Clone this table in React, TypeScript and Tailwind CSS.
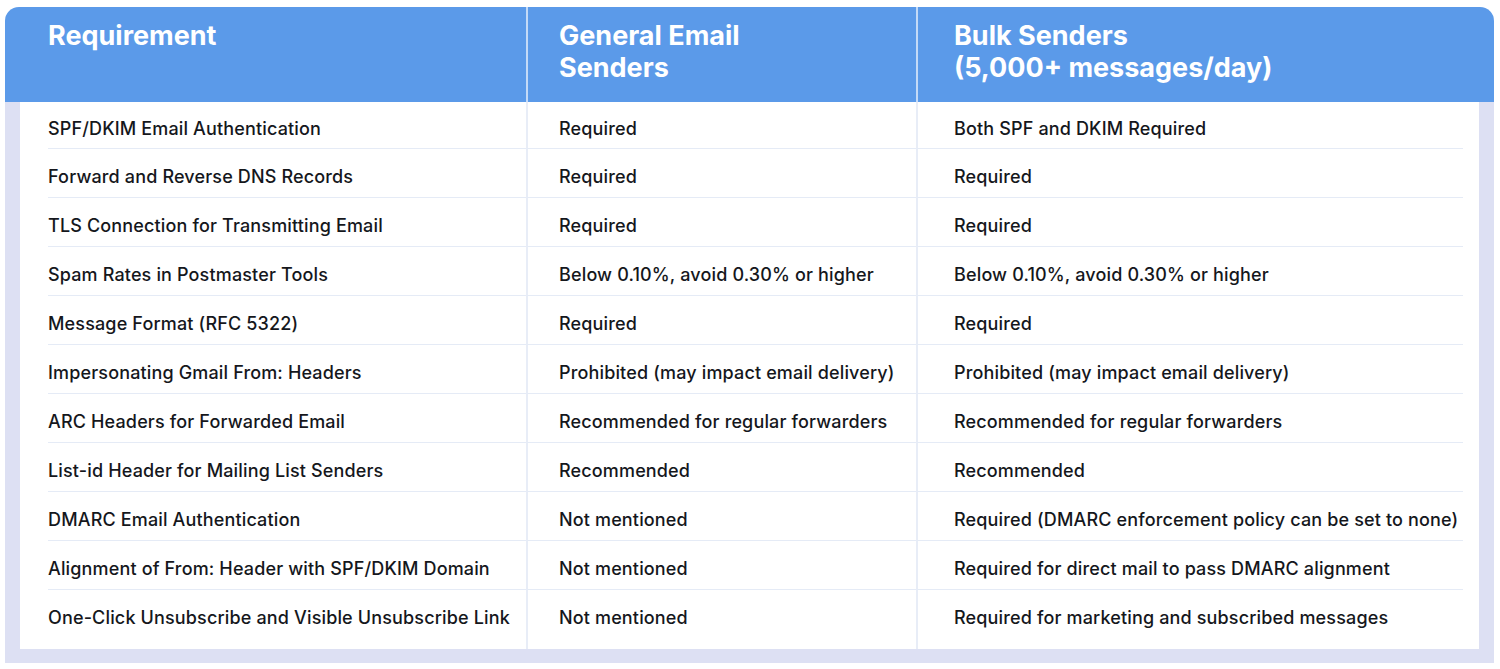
import React from 'react';

const rows: [string, string, string][] = [
  ['SPF/DKIM Email Authentication', 'Required', 'Both SPF and DKIM Required'],
  ['Forward and Reverse DNS Records', 'Required', 'Required'],
  ['TLS Connection for Transmitting Email', 'Required', 'Required'],
  ['Spam Rates in Postmaster Tools', 'Below 0.10%, avoid 0.30% or higher', 'Below 0.10%, avoid 0.30% or higher'],
  ['Message Format (RFC 5322)', 'Required', 'Required'],
  ['Impersonating Gmail From: Headers', 'Prohibited (may impact email delivery)', 'Prohibited (may impact email delivery)'],
  ['ARC Headers for Forwarded Email', 'Recommended for regular forwarders', 'Recommended for regular forwarders'],
  ['List-id Header for Mailing List Senders', 'Recommended', 'Recommended'],
  ['DMARC Email Authentication', 'Not mentioned', 'Required (DMARC enforcement policy can be set to none)'],
  ['Alignment of From: Header with SPF/DKIM Domain', 'Not mentioned', 'Required for direct mail to pass DMARC alignment'],
  ['One-Click Unsubscribe and Visible Unsubscribe Link', 'Not mentioned', 'Required for marketing and subscribed messages'],
];

const App = () => {
  return (
    <div className="min-h-screen bg-white pt-[7px] px-[5px]" style={{ fontFamily: 'Inter, "Noto Sans", sans-serif' }}>
      <div className="w-[1489px]">
        {/* header */}
        <div className="grid grid-cols-[521px_390px_1fr] bg-[#5b9ae9] rounded-t-[14px] text-white font-bold text-[27px] leading-[32px] h-[95px]">
          <div className="pl-[43px] pt-[13px]">Requirement</div>
          <div className="pl-[31px] pt-[13px] border-l-2 border-[#c4daf7]">
            General Email
            <br />
            Senders
          </div>
          <div className="pl-[36px] pt-[13px] border-l-2 border-[#c4daf7]">
            Bulk Senders
            <br />
            (5,000+ messages/day)
          </div>
        </div>

        {/* body */}
        <div className="bg-[#dde0f3] px-[15px] pb-[14px]">
          <div className="bg-white grid grid-cols-[506px_390px_1fr] text-[18px] tracking-[0.15px] leading-[24px] font-[550] text-[#15171c]">
            {rows.map((r, i) => {
              const first = i === 0;
              const last = i === rows.length - 1;
              const pad = first ? 'pt-[15px] pb-[7px]' : last ? 'pt-[16px] pb-[19px]' : 'pt-[16px] pb-[8px]';
              const line = last ? '' : 'border-b border-[#e5ebf6]';
              return (
                <React.Fragment key={i}>
                  <div className={`ml-[28px] whitespace-nowrap ${pad} ${line}`}>{r[0]}</div>
                  <div className={`pl-[31px] whitespace-nowrap border-l-2 border-l-[#e8edf7] ${pad} ${line}`}>{r[1]}</div>
                  <div className={`pl-[36px] mr-[16px] whitespace-nowrap border-l-2 border-l-[#e8edf7] ${pad} ${line}`}>{r[2]}</div>
                </React.Fragment>
              );
            })}
          </div>
        </div>
      </div>
    </div>
  );
};

export default App;
